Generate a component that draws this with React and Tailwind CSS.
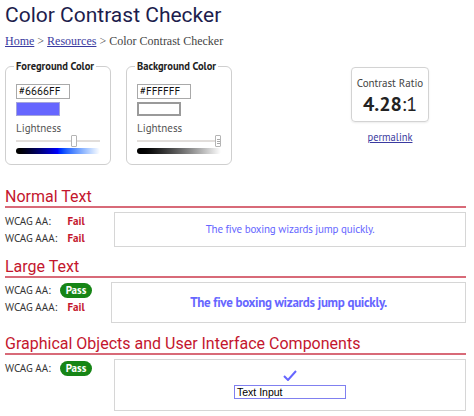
import React from "react";

const ui = { fontFamily: "'PT Sans', Lato, sans-serif" };
const rob = { fontFamily: "Roboto, 'Liberation Sans', sans-serif" };

const ColorField = ({ legend, hex, swatchClass, gradient, thumbLeft, grip }) => (
  <fieldset className="border border-[#cfcfcf] rounded-[6px] px-[10px] pb-[10px] shrink-0 w-[106px] min-w-0">
    <legend className="px-[2px] -ml-[2px] text-[10.5px] font-bold leading-[14px] text-[#222] whitespace-nowrap">
      {legend}
    </legend>
    <div className="mt-[11px] w-[54px] h-[15px] border border-[#a9a9a9] text-[11px] leading-[13px] pl-[2px] text-[#111]">
      {hex}
    </div>
    <div className={"mt-[3px] w-[44px] h-[14px] " + swatchClass} />
    <div className="mt-[5px] text-[11px] leading-[14px] text-[#555]">Lightness</div>
    <div className="relative h-[12px] w-[84px]">
      <div className="absolute left-0 right-0 top-[5px] h-[2px] bg-[#e2dedb]" />
      <div
        className="absolute top-0 w-[6px] h-[12px] bg-white border border-[#b5b5b5] rounded-[1px] flex flex-col justify-center items-center gap-[1px]"
        style={{ left: thumbLeft }}
      >
        {grip && (
          <>
            <div className="w-[3px] h-px bg-[#aaa]" />
            <div className="w-[3px] h-px bg-[#aaa]" />
            <div className="w-[3px] h-px bg-[#aaa]" />
          </>
        )}
      </div>
    </div>
    <div className={"mt-[1px] h-[6px] w-[84px] rounded-[3px] " + gradient} />
  </fieldset>
);

const Heading = ({ children }) => (
  <h2
    className="text-[16px] leading-[19px] text-[#c4162e] border-b-2 border-[#d86a78] whitespace-nowrap"
    style={rob}
  >
    {children}
  </h2>
);

const Label = ({ name, pass }) => (
  <div className="flex items-center h-[17px] whitespace-nowrap">
    <span className="w-[55px] text-[11px] text-[#333]">{name}</span>
    <span className="w-[32px] flex justify-center">
      {pass ? (
        <span className="h-[15px] w-[32px] rounded-full bg-[#168516] text-white text-[11px] font-bold leading-[15px] text-center">
          Pass
        </span>
      ) : (
        <span className="text-[11px] font-bold text-[#c4162e]">Fail</span>
      )}
    </span>
  </div>
);

export default function App() {
  return (
    <div className="w-[474px] h-[416px] bg-white pl-[5px] pr-[8px] overflow-hidden" style={ui}>
      <h1 className="text-[21px] leading-[30px] text-[#1d1d4d]" style={rob}>
        Color Contrast Checker
      </h1>
      <div
        className="mt-[4px] text-[12px] leading-[14px] text-[#444]"
        style={{ fontFamily: "'Liberation Serif', serif" }}
      >
        <a href="#" className="underline text-[#3a3aa0]">Home</a>
        {" > "}
        <a href="#" className="underline text-[#3a3aa0]">Resources</a>
        {" > Color Contrast Checker"}
      </div>

      <div className="flex items-start mt-[11px]">
        <ColorField
          legend="Foreground Color"
          hex="#6666FF"
          swatchClass="bg-[#6666ff] border border-[#a4a4dc]"
          gradient="bg-gradient-to-r from-black via-[#0000ff] to-white"
          thumbLeft="55px"
        />
        <div className="ml-[15px]">
          <ColorField
            legend="Background Color"
            hex="#FFFFFF"
            swatchClass="bg-white border-2 border-[#9a9a9a]"
            gradient="bg-gradient-to-r from-black to-white"
            thumbLeft="78px"
            grip
          />
        </div>
        <div className="ml-[119px] mt-[8px] flex flex-col items-center">
          <div className="w-[78px] h-[55px] border border-[#d3d3d3] rounded-[4px] shadow-[0_1px_2px_rgba(0,0,0,0.08)] flex flex-col items-center pt-[8px]">
            <div className="text-[11px] leading-[14px] text-[#444] whitespace-nowrap">Contrast Ratio</div>
            <div className="mt-[2px] text-[20px] leading-[24px] text-[#222]">
              <span className="font-bold">4.28</span>:1
            </div>
          </div>
          <a href="#" className="mt-[8px] text-[10.5px] leading-[14px] underline text-[#3a3aa0]">
            permalink
          </a>
        </div>
      </div>

      <div className="mt-[22px]">
        <Heading>Normal Text</Heading>
        <div className="flex mt-[4px]">
          <div className="w-[109px] pt-[1px] shrink-0">
            <Label name="WCAG AA:" />
            <Label name="WCAG AAA:" />
          </div>
          <div className="flex-1 h-[35px] border border-[#d6d6d6] flex items-center justify-center text-[11px] tracking-[-0.2px] text-[#6666ff]">
            The five boxing wizards jump quickly.
          </div>
        </div>
      </div>

      <div className="mt-[10px]">
        <Heading>Large Text</Heading>
        <div className="flex mt-[4px]">
          <div className="w-[106px] shrink-0">
            <Label name="WCAG AA:" pass />
            <Label name="WCAG AAA:" />
          </div>
          <div className="flex-1 h-[41px] border border-[#d6d6d6] flex items-center justify-center text-[13px] tracking-[-0.3px] font-bold text-[#6666ff]">
            The five boxing wizards jump quickly.
          </div>
        </div>
      </div>

      <div className="mt-[11px]">
        <Heading>Graphical Objects and User Interface Components</Heading>
        <div className="flex mt-[4px]">
          <div className="w-[109px] pt-[1px] shrink-0">
            <Label name="WCAG AA:" pass />
          </div>
          <div className="flex-1 h-[52px] border border-[#d6d6d6] flex flex-col items-center pt-[10px]">
            <svg width="14" height="11" viewBox="0 0 14 11">
              <polyline points="1,6 5,10 13,1" fill="none" stroke="#6666ff" strokeWidth="2" />
            </svg>
            <div
              className="mt-[4px] w-[112px] h-[14px] border border-[#8080f0] text-[10.5px] leading-[12px] pl-[2px] text-black"
              style={{ fontFamily: "'Liberation Sans', Arial, sans-serif" }}
            >
              Text Input
            </div>
          </div>
        </div>
      </div>
    </div>
  );
}
